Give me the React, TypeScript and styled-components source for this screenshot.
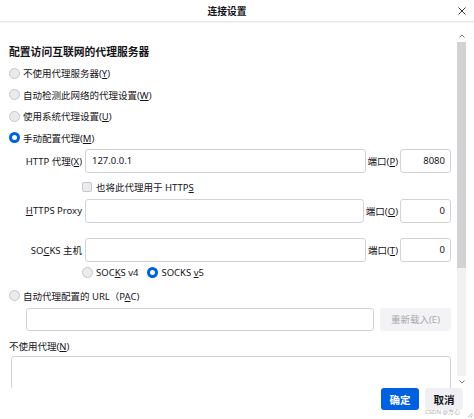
import React from 'react';
import styled, { createGlobalStyle } from 'styled-components';

const GlobalStyle = createGlobalStyle`
  html, body {
    margin: 0;
    padding: 0;
    background: #ffffff;
  }
  body {
    font-family: "Noto Sans", "Noto Sans CJK SC", sans-serif;
    color: #15141a;
  }
`;

const Dialog = styled.div`
  position: relative;
  width: 474px;
  height: 419px;
  display: flex;
  flex-direction: column;
  overflow: hidden;
  background: #ffffff;
`;

const TitleBar = styled.div`
  flex-shrink: 0;
  height: 21px;
  display: grid;
  grid-template-columns: 1fr auto 1fr;
  align-items: center;
  border-bottom: 1px solid #e6e6e8;
  box-shadow: 0 1px 1px rgba(0, 0, 0, 0.04);
`;

const Title = styled.div`
  grid-column: 2;
  padding-right: 20px;
  font-size: 9.75px;
  font-weight: 700;
`;

const CloseButton = styled.button`
  justify-self: end;
  display: flex;
  align-items: center;
  justify-content: center;
  width: 16px;
  height: 16px;
  margin-right: 4px;
  padding: 0;
  border: none;
  background: transparent;
  color: #3a3a3e;
`;

const Body = styled.div`
  flex-shrink: 0;
  height: 366px;
  display: flex;
`;

const Content = styled.div`
  flex: 1;
  min-width: 0;
  overflow: hidden;
  padding: 22px 6px 0 9px;
  font-size: 9.5px;
`;

const Heading = styled.h2`
  margin: 0 0 2.5px;
  height: 16px;
  font-size: 10.8px;
  font-weight: 700;
  line-height: 16px;
  white-space: nowrap;
`;

const OptionRow = styled.div<{ $indent?: number; $height?: number; $gap?: number; $top?: number }>`
  display: flex;
  align-items: center;
  height: ${(p) => p.$height ?? 21.5}px;
  margin-top: ${(p) => p.$top ?? 0}px;
  padding-left: ${(p) => p.$indent ?? 0}px;
  gap: ${(p) => p.$gap ?? 3}px;
  white-space: nowrap;
`;

const Option = styled.span`
  display: inline-flex;
  align-items: center;
  gap: 3px;
`;

const Radio = styled.span<{ $checked?: boolean }>`
  flex-shrink: 0;
  box-sizing: border-box;
  width: 11px;
  height: 11px;
  border-radius: 50%;
  border: ${(p) => (p.$checked ? '3px solid #0061e0' : '1px solid #c6c6cb')};
  background: ${(p) => (p.$checked ? '#ffffff' : '#ebebee')};
`;

const Checkbox = styled.span`
  flex-shrink: 0;
  box-sizing: border-box;
  width: 10px;
  height: 10px;
  border: 1px solid #c6c6cb;
  border-radius: 2px;
  background: #ebebee;
`;

const Key = styled.u`
  text-underline-offset: 1px;
`;

const ProxyRow = styled.div<{ $top?: number }>`
  display: flex;
  align-items: center;
  height: 24px;
  margin-top: ${(p) => p.$top ?? 0}px;
  white-space: nowrap;
`;

const FieldLabel = styled.span`
  flex-shrink: 0;
  width: 73px;
  margin-right: 3px;
  text-align: right;
`;

const PortLabel = styled.span`
  flex-shrink: 0;
  margin: 0 2px;
`;

const TextField = styled.input<{ $width?: number; $align?: 'left' | 'right'; $height?: number }>`
  box-sizing: border-box;
  flex: ${(p) => (p.$width ? `0 0 ${p.$width}px` : '1')};
  min-width: 0;
  height: ${(p) => p.$height ?? 24}px;
  margin: 0;
  padding: ${(p) => (p.$align === 'right' ? '0 5px 0 4px' : '0 6px')};
  border: 1px solid #d2d2d8;
  border-radius: 3px;
  background: #ffffff;
  font: inherit;
  color: #15141a;
  text-align: ${(p) => p.$align ?? 'left'};
  outline: none;
`;

const PacRow = styled.div`
  display: flex;
  align-items: center;
  gap: 6px;
  height: 23px;
  margin-top: 1px;
  padding-left: 17px;
`;

const GhostButton = styled.button`
  box-sizing: border-box;
  flex: 0 0 71px;
  height: 23px;
  padding: 0;
  border: none;
  border-radius: 3px;
  background: #f3f3f5;
  font: inherit;
  color: #a7a7ad;
`;

const SectionLabel = styled.div`
  height: 16px;
  margin-top: 8px;
  line-height: 16px;
`;

const NoProxyBox = styled.textarea`
  display: block;
  box-sizing: border-box;
  width: calc(100% - 2px);
  height: 60px;
  margin: 1px 0 0 2px;
  border: 1px solid #d2d2d8;
  border-radius: 3px;
  resize: none;
  font: inherit;
  outline: none;
`;

const Scrollbar = styled.div`
  flex-shrink: 0;
  width: 9px;
  margin: 8px 8px 0 0;
  display: flex;
  flex-direction: column;
`;

const ScrollArrow = styled.div`
  display: flex;
  align-items: center;
  justify-content: center;
  height: 12px;
  color: #7a7a7e;
`;

const ScrollThumb = styled.div`
  height: 226px;
  background: #d2d2d4;
`;

const ScrollTrack = styled.div`
  flex: 1;
  background: #f1f1f2;
`;

const Footer = styled.div`
  display: flex;
  justify-content: flex-end;
  gap: 6px;
  padding-right: 11px;
`;

const DialogButton = styled.button<{ $primary?: boolean }>`
  box-sizing: border-box;
  width: 38px;
  height: 22px;
  padding: 0;
  border: none;
  border-radius: 3px;
  background: ${(p) => (p.$primary ? '#0061e0' : '#f0f0f4')};
  color: ${(p) => (p.$primary ? '#ffffff' : '#15141a')};
  font-family: inherit;
  font-size: 10.5px;
  font-weight: 700;
`;

const Watermark = styled.span`
  position: absolute;
  right: 14px;
  bottom: 3px;
  font-size: 6px;
  color: #b0b0b4;
  white-space: nowrap;
`;

const ResizeGrip = styled.svg`
  position: absolute;
  right: 1px;
  bottom: 1px;
`;

const Chevron = ({ up }: { up?: boolean }) => (
  <svg width="6" height="4" viewBox="0 0 6 4">
    <path
      d={up ? 'M0.5 3.5 L3 1 L5.5 3.5' : 'M0.5 0.5 L3 3 L5.5 0.5'}
      fill="none"
      stroke="currentColor"
      strokeWidth="1"
    />
  </svg>
);

const App = () => {
  return (
    <>
      <GlobalStyle />
      <Dialog>
        <TitleBar>
          <Title>连接设置</Title>
          <CloseButton aria-label="关闭">
            <svg width="8" height="8" viewBox="0 0 8 8">
              <path d="M0.5 0.5 L7.5 7.5 M7.5 0.5 L0.5 7.5" stroke="currentColor" strokeWidth="1" />
            </svg>
          </CloseButton>
        </TitleBar>

        <Body>
          <Content>
            <Heading>配置访问互联网的代理服务器</Heading>

            <OptionRow>
              <Radio />
              <span>
                不使用代理服务器(<Key>Y</Key>)
              </span>
            </OptionRow>
            <OptionRow>
              <Radio />
              <span>
                自动检测此网络的代理设置(<Key>W</Key>)
              </span>
            </OptionRow>
            <OptionRow>
              <Radio />
              <span>
                使用系统代理设置(<Key>U</Key>)
              </span>
            </OptionRow>
            <OptionRow>
              <Radio $checked />
              <span>
                手动配置代理(<Key>M</Key>)
              </span>
            </OptionRow>

            <ProxyRow>
              <FieldLabel>
                HTTP 代理(<Key>X</Key>)
              </FieldLabel>
              <TextField defaultValue="127.0.0.1" />
              <PortLabel>
                端口(<Key>P</Key>)
              </PortLabel>
              <TextField $width={51} $align="right" defaultValue="8080" />
            </ProxyRow>

            <OptionRow $indent={73} $height={20} $gap={4} $top={4}>
              <Checkbox />
              <span>
                也将此代理用于 HTTP<Key>S</Key>
              </span>
            </OptionRow>

            <ProxyRow $top={2}>
              <FieldLabel>
                <Key>H</Key>TTPS Proxy
              </FieldLabel>
              <TextField defaultValue="" />
              <PortLabel>
                端口(<Key>O</Key>)
              </PortLabel>
              <TextField $width={51} $align="right" defaultValue="0" />
            </ProxyRow>

            <ProxyRow $top={15}>
              <FieldLabel>
                SO<Key>C</Key>KS 主机
              </FieldLabel>
              <TextField defaultValue="" />
              <PortLabel>
                端口(<Key>T</Key>)
              </PortLabel>
              <TextField $width={51} $align="right" defaultValue="0" />
            </ProxyRow>

            <OptionRow $indent={73} $height={22} $gap={9}>
              <Option>
                <Radio />
                <span>
                  SOC<Key>K</Key>S v4
                </span>
              </Option>
              <Option>
                <Radio $checked />
                <span>
                  SOCKS <Key>v</Key>5
                </span>
              </Option>
            </OptionRow>

            <OptionRow $height={22} $top={1}>
              <Radio />
              <span>
                自动代理配置的 URL（P<Key>A</Key>C)
              </span>
            </OptionRow>

            <PacRow>
              <TextField $height={23} defaultValue="" />
              <GhostButton disabled>重新载入(E)</GhostButton>
            </PacRow>

            <SectionLabel>
              不使用代理(<Key>N</Key>)
            </SectionLabel>
            <NoProxyBox defaultValue="" />
          </Content>

          <Scrollbar>
            <ScrollArrow>
              <Chevron up />
            </ScrollArrow>
            <ScrollThumb />
            <ScrollTrack />
            <ScrollArrow>
              <Chevron />
            </ScrollArrow>
          </Scrollbar>
        </Body>

        <Footer>
          <DialogButton $primary>确定</DialogButton>
          <DialogButton>取消</DialogButton>
        </Footer>

        <Watermark>CSDN @方心</Watermark>
        <ResizeGrip width="6" height="6" viewBox="0 0 6 6">
          <path d="M5.5 1 L1 5.5 M5.5 3.5 L3.5 5.5" stroke="#9a9a9e" strokeWidth="0.8" />
        </ResizeGrip>
      </Dialog>
    </>
  );
};

export default App;
